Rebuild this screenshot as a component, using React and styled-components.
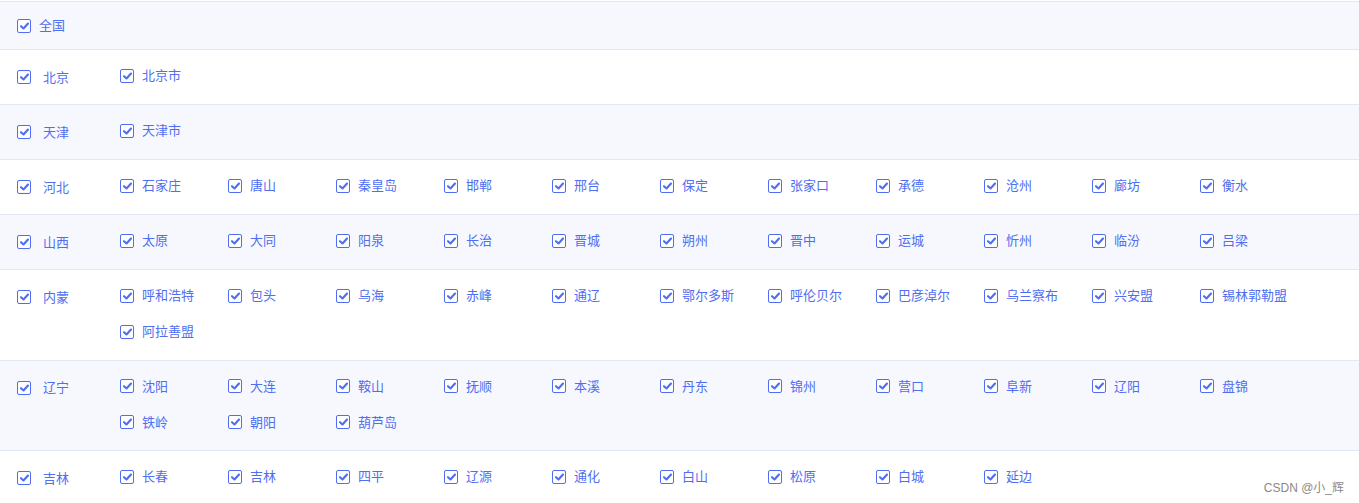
import styled, { createGlobalStyle } from "styled-components";

const GlobalStyle = createGlobalStyle`
  body {
    margin: 0;
    background: #fff;
    font-family: "Noto Sans CJK SC", "Noto Sans", sans-serif;
  }
`;

const data = [
  ["北京", ["北京市"]],
  ["天津", ["天津市"]],
  ["河北", ["石家庄", "唐山", "秦皇岛", "邯郸", "邢台", "保定", "张家口", "承德", "沧州", "廊坊", "衡水"]],
  ["山西", ["太原", "大同", "阳泉", "长治", "晋城", "朔州", "晋中", "运城", "忻州", "临汾", "吕梁"]],
  ["内蒙", ["呼和浩特", "包头", "乌海", "赤峰", "通辽", "鄂尔多斯", "呼伦贝尔", "巴彦淖尔", "乌兰察布", "兴安盟", "锡林郭勒盟", "阿拉善盟"]],
  ["辽宁", ["沈阳", "大连", "鞍山", "抚顺", "本溪", "丹东", "锦州", "营口", "阜新", "辽阳", "盘锦", "铁岭", "朝阳", "葫芦岛"]],
  ["吉林", ["长春", "吉林", "四平", "辽源", "通化", "白山", "松原", "白城", "延边"]],
];

const Page = styled.div`
  position: relative;
  padding-top: 1px;
  height: 502px;
  overflow: hidden;
`;

const Row = styled.div`
  display: flex;
  align-items: flex-start;
  background: ${(p) => (p.$alt ? "#f7f8fd" : "#fff")};
  border-bottom: 1px solid #e3e7f4;
  ${(p) => p.$first && "border-top: 1px solid #e3e7f4;"}
`;

const AllCell = styled.div`
  height: 47px;
  display: flex;
  align-items: center;
  padding-left: 17px;
`;

const ProvinceCell = styled.div`
  width: 103px;
  height: 54px;
  display: flex;
  align-items: center;
  padding-left: 17px;
  flex-shrink: 0;
`;

const Cities = styled.div`
  display: grid;
  grid-template-columns: repeat(11, 108px);
  grid-auto-rows: 36px;
  padding: 7.5px 0 10px;
`;

const Item = styled.label`
  display: flex;
  align-items: center;
  gap: ${(p) => p.$gap || 8}px;
  font-size: 13px;
  line-height: 1;
  color: #4f6ef2;
  white-space: nowrap;
  cursor: pointer;
`;

const Text = styled.span`
  display: block;
  line-height: 13px;
  position: relative;
  top: -1px;
`;

const Box = styled.span`
  width: 14px;
  height: 14px;
  box-sizing: border-box;
  border: 1.5px solid #4f6ef2;
  border-radius: 2px;
  background: #fff;
  display: flex;
  align-items: center;
  justify-content: center;
  flex-shrink: 0;
`;

const Watermark = styled.div`
  position: absolute;
  right: 15px;
  bottom: 8px;
  font-family: "Liberation Sans", "Noto Sans CJK SC", sans-serif;
  font-size: 12px;
  color: #8a8a8a;
`;

function Check({ label, gap }) {
  return (
    <Item $gap={gap}>
      <Box>
        <svg width="9" height="8" viewBox="0 0 9 8">
          <path d="M1 4.2 L3.5 6.5 L8 1.5" fill="none" stroke="#4f6ef2" strokeWidth="2.1" strokeLinecap="round" strokeLinejoin="round" />
        </svg>
      </Box>
      <Text>{label}</Text>
    </Item>
  );
}

export default function App() {
  return (
    <Page>
      <GlobalStyle />
      <Row $alt $first>
        <AllCell>
          <Check label="全国" />
        </AllCell>
      </Row>
      {data.map(([prov, cities], i) => (
        <Row key={prov} $alt={i % 2 === 1}>
          <ProvinceCell>
            <Check label={prov} gap={12} />
          </ProvinceCell>
          <Cities>
            {cities.map((c) => (
              <Check key={c} label={c} />
            ))}
          </Cities>
        </Row>
      ))}
      <Watermark>CSDN @小_辉</Watermark>
    </Page>
  );
}
